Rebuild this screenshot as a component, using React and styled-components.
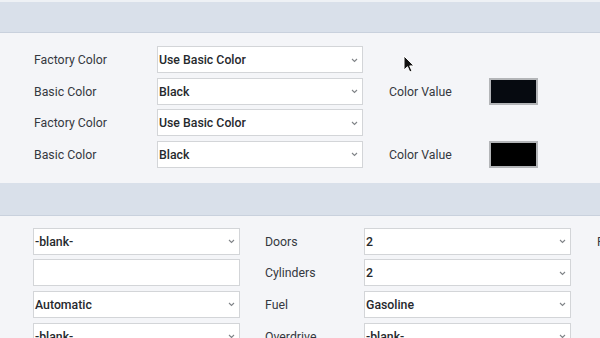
import styled, { createGlobalStyle } from 'styled-components';

const GlobalStyle = createGlobalStyle`
  html, body {
    margin: 0;
    padding: 0;
    background: #f4f5f8;
    font-family: Roboto, "Liberation Sans", Arial, sans-serif;
    overflow: hidden;
  }
`;

const Page = styled.div`
  position: relative;
  width: 600px;
  height: 338px;
  overflow: hidden;
  border-top: 2px solid #eef1f5;
  box-sizing: border-box;
`;

const Band = styled.div`
  height: ${(p) => p.h}px;
  background: #d9e0ea;
  border-bottom: 1px solid #c9d1dd;
  box-sizing: border-box;
`;

const Section = styled.div`
  display: grid;
  grid-template-columns: ${(p) => p.cols};
  grid-auto-rows: 27px;
  row-gap: 4.6px;
  align-items: center;
  padding: ${(p) => p.pad};
  white-space: nowrap;
`;

const Label = styled.div`
  font-size: 12.3px;
  color: #343840;
  padding-top: 1px;
`;

const SelectBox = styled.div`
  height: 27px;
  box-sizing: border-box;
  background: #fff;
  border: 1.5px solid #d3d5d8;
  display: flex;
  align-items: center;
  justify-content: space-between;
  padding: 1px 4px 0 1px;
  font-size: 12.3px;
  font-weight: 500;
  color: #26292d;
`;

const Swatch = styled.div`
  width: 49px;
  height: 27px;
  box-sizing: border-box;
  border: 2px solid #b3b5b8;
  background: ${(p) => p.color};
`;

const Cursor = styled.svg`
  position: absolute;
  left: 403px;
  top: 53px;
`;

const Chevron = () => (
  <svg width="7" height="5" viewBox="0 0 7 5">
    <path d="M1 1l2.5 2.5L6 1" fill="none" stroke="#808488" strokeWidth="1.1" />
  </svg>
);

const Select = ({ value, empty }) => (
  <SelectBox>
    <span>{value}</span>
    {!empty && <Chevron />}
  </SelectBox>
);

const Empty = styled.div``;

const App = () => {
  return (
    <Page>
      <GlobalStyle />
      <Band h={31} />
      <Section cols="123px 206px 26px 100px 49px" pad="13px 0 15px 34px">
        <Label>Factory Color</Label>
        <Select value="Use Basic Color" />
        <Empty />
        <Empty />
        <Empty />
        <Label>Basic Color</Label>
        <Select value="Black" />
        <Empty />
        <Label>Color Value</Label>
        <Swatch color="#060a10" />
        <Label>Factory Color</Label>
        <Select value="Use Basic Color" />
        <Empty />
        <Empty />
        <Empty />
        <Label>Basic Color</Label>
        <Select value="Black" />
        <Empty />
        <Label>Color Value</Label>
        <Swatch color="#000" />
      </Section>
      <Band h={33} />
      <Section cols="207px 25px 99px 207px 26px 40px" pad="12px 0 0 33px">
        <Select value="-blank-" />
        <Empty />
        <Label>Doors</Label>
        <Select value="2" />
        <Empty />
        <Label>F</Label>
        <Select value="" empty />
        <Empty />
        <Label>Cylinders</Label>
        <Select value="2" />
        <Empty />
        <Empty />
        <Select value="Automatic" />
        <Empty />
        <Label>Fuel</Label>
        <Select value="Gasoline" />
        <Empty />
        <Empty />
        <Select value="-blank-" />
        <Empty />
        <Label>Overdrive</Label>
        <Select value="-blank-" />
        <Empty />
        <Empty />
      </Section>
      <Cursor width="12" height="18" viewBox="0 0 12 18">
        <path d="M1 1v14l3.5-3.3 2.3 5.3 2.2-1-2.3-5.1H11z" fill="#111" stroke="#fff" strokeWidth="1" />
      </Cursor>
    </Page>
  );
};

export default App;
